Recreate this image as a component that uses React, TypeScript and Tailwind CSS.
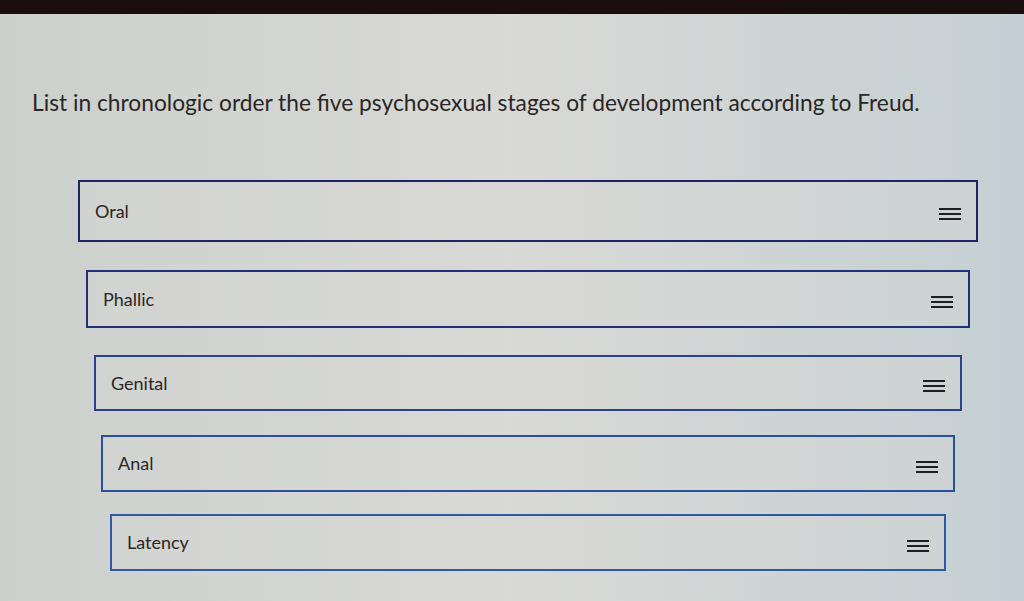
import clsx from 'clsx'

const stages = [
  { label: 'Oral', row: 'mt-[13px] ml-[78px] mr-[46px] h-[62px] border-[#1e2466]' },
  { label: 'Phallic', row: 'mt-[28px] ml-[86px] mr-[54px] h-[58px] border-[#22307a]' },
  { label: 'Genital', row: 'mt-[27px] ml-[94px] mr-[62px] h-[56px] border-[#27438f]' },
  { label: 'Anal', row: 'mt-[24px] ml-[101px] mr-[69px] h-[57px] border-[#2a4f9c]' },
  { label: 'Latency', row: 'mt-[22px] ml-[110px] mr-[78px] h-[57px] border-[#2c5aa6]' },
]

function DragHandle() {
  return (
    <div className="mt-[6px] flex flex-col gap-[3px] w-[22px]">
      <span className="h-[2px] bg-[#1f1f22]" />
      <span className="h-[2px] bg-[#1f1f22]" />
      <span className="h-[2px] bg-[#1f1f22]" />
    </div>
  )
}

export default function App() {
  return (
    <div className="h-[601px] w-[1024px] overflow-hidden bg-gradient-to-r from-[#ccd0cd] via-[#d9d9d6] to-[#c4d0d3] font-['Lato','Liberation_Sans',sans-serif] text-[#2a2624]">
      <div className="h-[14px] bg-[#1a0d0e]" />
      <h1 className="mt-[74px] ml-[32px] text-[22.75px] leading-[30px]">
        List in chronologic order the five psychosexual stages of development according to Freud.
      </h1>
      <div className="mt-[49px] flex flex-col">
        {stages.map((s) => (
          <div
            key={s.label}
            className={clsx('flex items-center justify-between border-2 bg-[#d6d8d5]/40 pl-[15px] pr-[15px]', s.row)}
          >
            <span className="text-[18px]">{s.label}</span>
            <DragHandle />
          </div>
        ))}
      </div>
    </div>
  )
}
